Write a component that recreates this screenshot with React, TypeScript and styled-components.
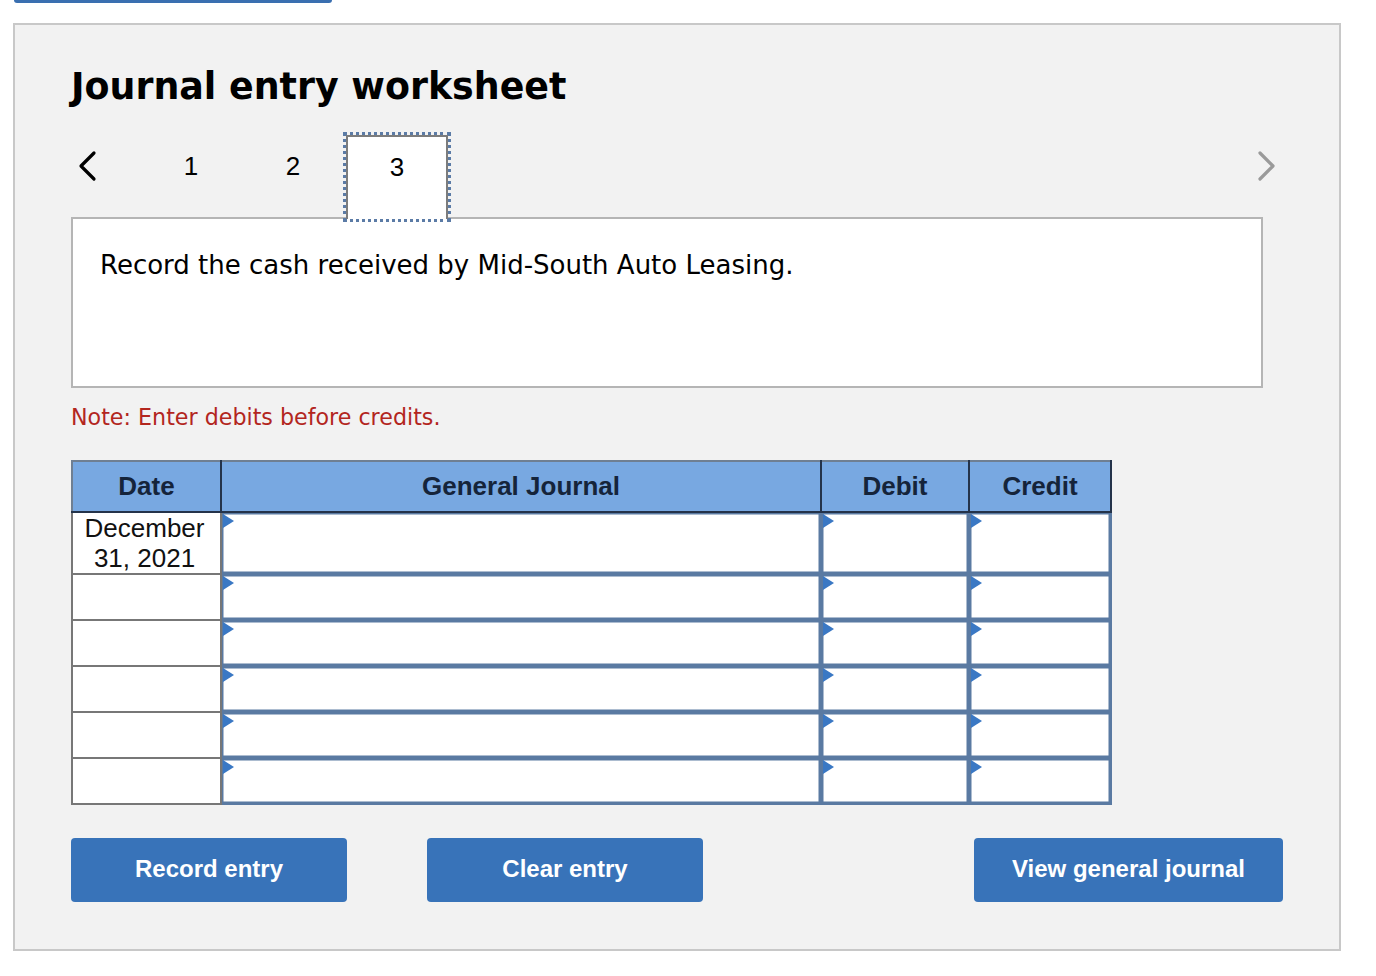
import React from "react";
import styled, { createGlobalStyle } from "styled-components";

const Global = createGlobalStyle`
  html, body { margin: 0; padding: 0; background: #ffffff; }
  body { font-family: "DejaVu Sans", Verdana, sans-serif; }
`;

const Page = styled.div`
  width: 1376px;
  height: 976px;
  position: relative;
  overflow: hidden;
  background: #fff;
`;

const TopTab = styled.div`
  margin-left: 14px;
  width: 318px;
  height: 3px;
  background: #3a6fb0;
  border-radius: 0 0 4px 4px;
`;

const Panel = styled.div`
  box-sizing: border-box;
  margin: 20px 0 0 13px;
  width: 1328px;
  height: 928px;
  background: #f2f2f2;
  border: 2px solid #c8c8c8;
  padding: 0 0 0 56px;
  display: flex;
  flex-direction: column;
`;

const Title = styled.h1`
  margin: 37px 0 0 0;
  font-family: "DejaVu Sans", Verdana, sans-serif;
  font-weight: 700;
  font-size: 36.4px;
  line-height: 50px;
  color: #000;
`;

const NavRow = styled.div`
  display: flex;
  align-items: stretch;
  height: 82px;
  margin-top: 23px;
  width: 1207px;
`;

const Chevron = styled.button<{ $muted?: boolean; $w: number }>`
  border: none;
  background: transparent;
  padding: 0 0 20px 6px;
  width: ${(p) => p.$w}px;
  display: flex;
  align-items: center;
  justify-content: flex-start;
  box-sizing: border-box;
  color: ${(p) => (p.$muted ? "#9a9a9a" : "#000")};
`;

const Spacer = styled.div`
  flex: 1;
`;

const Tab = styled.div<{ $active?: boolean }>`
  box-sizing: border-box;
  width: 102px;
  display: flex;
  align-items: center;
  justify-content: center;
  padding-bottom: 20px;
  font-family: "Liberation Sans", Arial, sans-serif;
  font-size: 26px;
  color: #000;
  position: relative;
  ${(p) =>
    p.$active
      ? `
    background: #fff;
    border: 2px solid #7c7c7c;
    border-bottom: none;
    height: 84px;
    margin-left: 2px;
    width: 102px;
    padding-bottom: 22px;
    outline: 3px dotted #5b7ba6;
    outline-offset: 0px;
    z-index: 2;
  `
      : ""}
`;

const Question = styled.div`
  box-sizing: border-box;
  width: 1192px;
  height: 171px;
  background: #fff;
  border: 2px solid #b5b5b5;
  padding: 30px 0 0 27px;
  font-family: "DejaVu Sans", Verdana, sans-serif;
  font-size: 26px;
  color: #000;
  line-height: 32px;
`;

const Note = styled.div`
  margin-top: 15px;
  font-family: "DejaVu Sans", Verdana, sans-serif;
  font-size: 22.2px;
  line-height: 28px;
  color: #b3261e;
`;

const Table = styled.table`
  margin-top: 29px;
  border-collapse: collapse;
  table-layout: fixed;
  width: 1039px;
  font-family: "Liberation Sans", Arial, sans-serif;
`;

const Th = styled.th<{ $w: number }>`
  width: ${(p) => p.$w}px;
  height: 49px;
  background: #78a8e1;
  border: 2px solid #24334a;
  border-top-color: #6f7f92;
  border-left-color: #6f7f92;
  color: #15243a;
  font-size: 26px;
  font-weight: 700;
  padding: 0;
  text-align: center;
`;

const DateCell = styled.td<{ $h: number }>`
  height: ${(p) => p.$h}px;
  background: #fff;
  border: 2px solid #777;
  padding: 0 4px 0 0;
  text-align: center;
  vertical-align: middle;
  font-size: 26px;
  line-height: 30px;
  color: #111;
`;

const InputCell = styled.td`
  background: #fff;
  border: 2px solid #5a7aa2;
  box-shadow: inset 0 0 0 1.5px #5a7aa2;
  padding: 0;
  position: relative;
  &::before {
    content: "";
    position: absolute;
    left: 1px;
    top: 1px;
    width: 0;
    height: 0;
    border-left: 11px solid #3a78c4;
    border-top: 7px solid transparent;
    border-bottom: 7px solid transparent;
  }
`;

const ButtonRow = styled.div`
  display: flex;
  margin-top: 33px;
  width: 1212px;
`;

const Button = styled.button<{ $w: number; $gap?: number }>`
  width: ${(p) => p.$w}px;
  height: 64px;
  margin-left: ${(p) => p.$gap ?? 0}px;
  background: #3873b9;
  border: none;
  border-radius: 4px;
  color: #fff;
  font-family: "Liberation Sans", Arial, sans-serif;
  font-weight: 700;
  font-size: 24px;
  padding: 0 0 2px 0;
`;

const rows = [60, 44, 44, 44, 44, 44];

export default function App() {
  return (
    <Page>
      <Global />
      <TopTab />
      <Panel>
        <Title>Journal entry worksheet</Title>
        <NavRow>
          <Chevron $w={69} aria-label="previous">
            <svg width="22" height="32" viewBox="0 0 22 32">
              <polyline points="17,3 4,16 17,29" fill="none" stroke="currentColor" strokeWidth="3.2" strokeLinecap="round" strokeLinejoin="round" />
            </svg>
          </Chevron>
          <Tab>1</Tab>
          <Tab>2</Tab>
          <Tab $active>3</Tab>
          <Spacer />
          <Chevron $muted $w={28} aria-label="next">
            <svg width="22" height="32" viewBox="0 0 22 32">
              <polyline points="4,3 17,16 4,29" fill="none" stroke="currentColor" strokeWidth="3.2" strokeLinecap="round" strokeLinejoin="round" />
            </svg>
          </Chevron>
        </NavRow>
        <Question>Record the cash received by Mid-South Auto Leasing.</Question>
        <Note>Note: Enter debits before credits.</Note>
        <Table>
          <thead>
            <tr>
              <Th $w={147}>Date</Th>
              <Th $w={598}>General Journal</Th>
              <Th $w={146}>Debit</Th>
              <Th $w={140}>Credit</Th>
            </tr>
          </thead>
          <tbody>
            {rows.map((h, i) => (
              <tr key={i}>
                <DateCell $h={h}>
                  {i === 0 ? (
                    <>
                      December
                      <br />
                      31, 2021
                    </>
                  ) : null}
                </DateCell>
                <InputCell />
                <InputCell />
                <InputCell />
              </tr>
            ))}
          </tbody>
        </Table>
        <ButtonRow>
          <Button $w={276}>Record entry</Button>
          <Button $w={276} $gap={80}>Clear entry</Button>
          <Button $w={309} $gap={271}>View general journal</Button>
        </ButtonRow>
      </Panel>
    </Page>
  );
}
